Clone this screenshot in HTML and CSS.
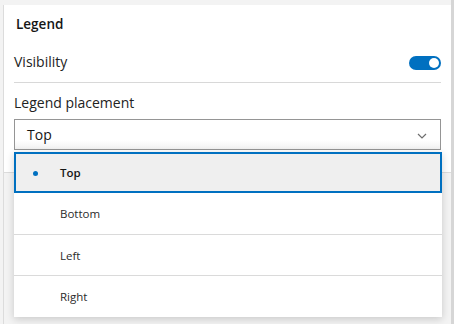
FILE: index.html
```html
<!DOCTYPE html>
<html>
<head>
<meta charset="utf-8">
<link rel="stylesheet" href="styles.css">
</head>
<body>
<div class="frame">
  <div class="panel">
    <div class="content">
      <div class="heading">Legend</div>
      <div class="row">
        <span class="label">Visibility</span>
        <span class="switch"><span class="knob"></span></span>
      </div>
      <div class="field">
        <div class="label">Legend placement</div>
        <div class="select">
          <span>Top</span>
          <svg class="chev" width="10" height="6" viewBox="0 0 10 6"><path d="M1 1 L5 5 L9 1" fill="none" stroke="#6e6e6e" stroke-width="1.2"/></svg>
        </div>
      </div>
    </div>
    <div class="rest"></div>
    <ul class="menu">
      <li class="item active"><span class="dot"></span>Top</li>
      <li class="item">Bottom</li>
      <li class="item">Left</li>
      <li class="item">Right</li>
    </ul>
  </div>
  <div class="scroll"></div>
</div>
</body>
</html>
```
FILE: styles.css
```css
html, body { margin: 0; padding: 0; }
body {
  background: #f3f3f3;
  font-family: "Open Sans", Lato, sans-serif;
  color: #151515;
  width: 454px;
  height: 324px;
  overflow: hidden;
}
.frame {
  display: flex;
  height: 324px;
  padding: 5px 0 0 3px;
  box-sizing: border-box;
}
.panel {
  position: relative;
  flex: 1;
  display: flex;
  flex-direction: column;
  border-left: 1px solid #dcdcdc;
}
.scroll {
  width: 3px;
  background: #d6d6d6;
  margin-top: -5px;
}
.content {
  background: #fff;
  padding: 0 10px 0 10px;
  height: 167px;
  border-bottom: 1px solid #dcdcdc;
}
.rest { flex: 1; background: #f3f3f3; }
.heading {
  font-size: 13.5px;
  font-weight: 600;
  padding: 11px 0 0 2px;
  height: 26px;
  line-height: 17px;
}
.row {
  display: flex;
  justify-content: space-between;
  align-items: center;
  height: 40px;
  border-bottom: 1px solid #d8d8d8;
}
.label { font-size: 14px; color: #222; }
.row .label { margin-top: -2px; }
.switch {
  width: 32px;
  height: 14px;
  border-radius: 7px;
  background: #0070c0;
  position: relative;
  margin-top: 1px;
}
.knob {
  position: absolute;
  right: 2px;
  top: 2px;
  width: 10px;
  height: 10px;
  border-radius: 50%;
  background: #fff;
}
.field { padding-top: 10px; }
.field .label { line-height: 20px; height: 26px; }
.select {
  height: 31px;
  box-sizing: border-box;
  border: 1px solid #959595;
  display: flex;
  align-items: center;
  justify-content: space-between;
  padding: 0 13px 0 12px;
  font-size: 14px;
  background: linear-gradient(#fff 70%, #f2f2f2);
}
.chev { margin-top: 2px; }
.menu {
  position: absolute;
  top: 147px;
  left: 10px;
  width: 428px;
  margin: 0;
  padding: 0;
  list-style: none;
  background: #fff;
  box-shadow: 0 2px 8px rgba(0,0,0,0.18);
}
.item {
  height: 41px;
  box-sizing: border-box;
  display: flex;
  align-items: center;
  padding-left: 46px;
  font-size: 11.5px;
  color: #2b2b2b;
  border-bottom: 1px solid #dadada;
}
.item:nth-child(2) { height: 42px; }
.item:last-child { border-bottom: none; }
.item.active {
  background: #efefef;
  border: 2px solid #0070c0;
  padding-left: 44px;
  font-weight: 600;
  color: #151515;
  position: relative;
}
.dot {
  position: absolute;
  left: 17px;
  top: 17px;
  width: 5px;
  height: 5px;
  border-radius: 50%;
  background: #0070c0;
}
```
